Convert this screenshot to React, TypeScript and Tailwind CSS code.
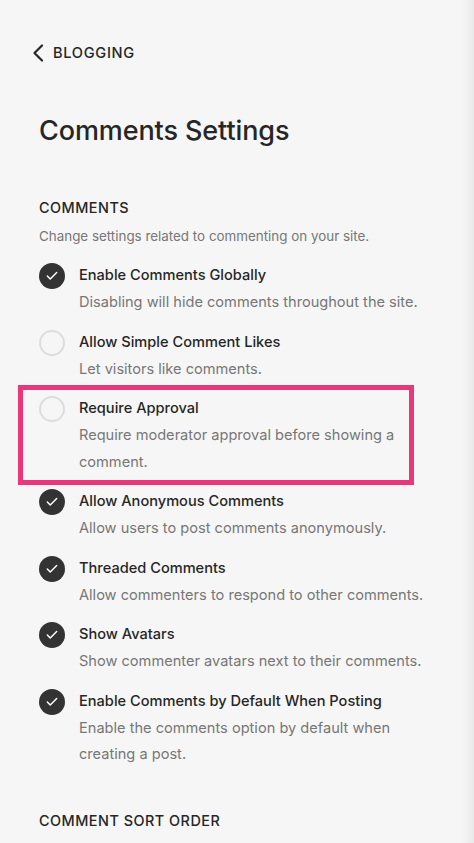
import { Check } from "lucide-react";

type Option = {
  title: string;
  desc: string;
  checked: boolean;
  highlight?: boolean;
};

const options: Option[] = [
  { title: "Enable Comments Globally", desc: "Disabling will hide comments throughout the site.", checked: true },
  { title: "Allow Simple Comment Likes", desc: "Let visitors like comments.", checked: false },
  { title: "Require Approval", desc: "Require moderator approval before showing a comment.", checked: false, highlight: true },
  { title: "Allow Anonymous Comments", desc: "Allow users to post comments anonymously.", checked: true },
  { title: "Threaded Comments", desc: "Allow commenters to respond to other comments.", checked: true },
  { title: "Show Avatars", desc: "Show commenter avatars next to their comments.", checked: true },
  { title: "Enable Comments by Default When Posting", desc: "Enable the comments option by default when creating a post.", checked: true },
];

function Toggle({ checked }: { checked: boolean }) {
  if (checked) {
    return (
      <div className="w-[26px] h-[26px] shrink-0 rounded-full bg-[#333333] flex items-center justify-center">
        <Check size={14} strokeWidth={2.6} className="text-white" />
      </div>
    );
  }
  return <div className="w-[26px] h-[26px] shrink-0 rounded-full border-2 border-[#dddddd] bg-[#f6f6f6]" />;
}

function OptionRow({ opt }: { opt: Option }) {
  return (
    <div className="relative flex gap-[14px]">
      {opt.highlight && (
        <div className="absolute left-[-21px] top-[-10px] w-[396px] bottom-[-10px] border-[5px] border-[#e8387a] pointer-events-none" />
      )}
      <div className="pt-[1px]">
        <Toggle checked={opt.checked} />
      </div>
      <div className="flex-1 min-w-0">
        <div className="text-[14.6px] leading-[27px] font-medium text-[#262626]">{opt.title}</div>
        <div className="text-[14.6px] leading-[26.5px] text-[#777777]">{opt.desc}</div>
      </div>
    </div>
  );
}

export default function App() {
  return (
    <div
      className="w-full h-[843px] overflow-hidden bg-[#f6f6f6] shadow-[inset_-14px_0_12px_-10px_rgba(0,0,0,0.07)]"
      style={{ fontFamily: "Inter, 'Liberation Sans', sans-serif" }}
    >
      <div className="pl-[39px] pr-[39px] pt-[43px]">
        <div className="flex items-center gap-[8px] -ml-[8px]">
          <svg width="14" height="18" viewBox="0 0 14 18" fill="none">
            <path d="M11 1.5 L3.5 9 L11 16.5" stroke="#262626" strokeWidth="2.2" strokeLinecap="round" strokeLinejoin="round" />
          </svg>
          <span className="text-[14.6px] leading-[20px] font-medium tracking-[0.7px] text-[#262626]">BLOGGING</span>
        </div>

        <h1 className="mt-[51px] text-[27px] leading-[34px] font-medium text-[#262626] tracking-[-0.1px]">
          Comments Settings
        </h1>

        <div className="mt-[50px] text-[14.4px] leading-[20px] font-medium tracking-[0.5px] text-[#262626]">COMMENTS</div>
        <div className="mt-[8px] text-[13.4px] leading-[20px] text-[#777777]">
          Change settings related to commenting on your site.
        </div>

        <div className="mt-[16px] flex flex-col gap-[13px]">
          {options.map((o) => (
            <OptionRow key={o.title} opt={o} />
          ))}
        </div>

        <div className="mt-[43px] text-[14.4px] leading-[20px] font-medium tracking-[0.5px] text-[#262626]">
          COMMENT SORT ORDER
        </div>
      </div>
    </div>
  );
}
